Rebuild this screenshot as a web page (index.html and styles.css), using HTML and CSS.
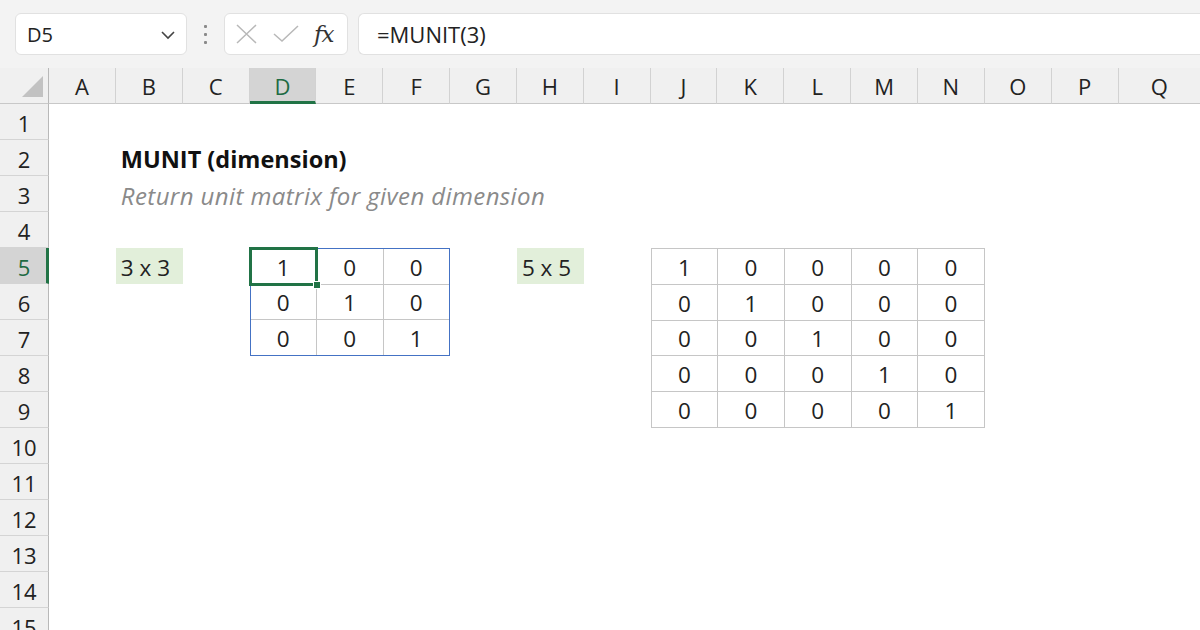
FILE: index.html
```html
<!DOCTYPE html>
<html>
<head>
<meta charset="utf-8">
<link rel="stylesheet" href="styles.css">
</head>
<body>
<div class="app">
  <div class="toolbar">
    <div class="namebox">
      <span class="nb-text">D5</span>
      <svg class="chev" width="16" height="10" viewBox="0 0 16 10"><path d="M2 2 L8 8 L14 2" fill="none" stroke="#444" stroke-width="1.6"/></svg>
    </div>
    <div class="vdots"><span></span><span></span><span></span></div>
    <div class="fxbox">
      <svg class="ic" width="24" height="20" viewBox="0 0 24 20"><path d="M2 1 L21 19 M21 1 L2 19" fill="none" stroke="#b8b8b8" stroke-width="1.5"/></svg>
      <svg class="ic" width="26" height="18" viewBox="0 0 26 18"><path d="M1 9 L9 16 L25 1" fill="none" stroke="#b8b8b8" stroke-width="1.5"/></svg>
      <span class="fx">fx</span>
    </div>
    <div class="formula">=MUNIT(3)</div>
  </div>

  <div class="sheet">
    <div class="corner"><span class="tri"></span></div>
    <div class="ch">A</div><div class="ch">B</div><div class="ch">C</div><div class="ch active">D</div>
    <div class="ch">E</div><div class="ch">F</div><div class="ch">G</div><div class="ch">H</div>
    <div class="ch">I</div><div class="ch">J</div><div class="ch">K</div><div class="ch">L</div>
    <div class="ch">M</div><div class="ch">N</div><div class="ch">O</div><div class="ch">P</div>
    <div class="ch last">Q</div>

    <div class="rh r1">1</div><div class="rh r2">2</div><div class="rh r3">3</div><div class="rh r4">4</div>
    <div class="rh r5 active">5</div><div class="rh r6">6</div><div class="rh r7">7</div><div class="rh r8">8</div>
    <div class="rh r9">9</div><div class="rh r10">10</div><div class="rh r11">11</div><div class="rh r12">12</div>
    <div class="rh r13">13</div><div class="rh r14">14</div><div class="rh r15">15</div>

    <div class="title">MUNIT (dimension)</div>
    <div class="subtitle">Return unit matrix for given dimension</div>
    <div class="label l3">3 x 3</div>
    <div class="label l5">5 x 5</div>

    <div class="mat m3">
      <div class="c sel">1<span class="selbox"></span><span class="handle"></span></div><div class="c">0</div><div class="c">0</div>
      <div class="c">0</div><div class="c">1</div><div class="c">0</div>
      <div class="c">0</div><div class="c">0</div><div class="c">1</div>
    </div>

    <div class="mat m5">
      <div class="c">1</div><div class="c">0</div><div class="c">0</div><div class="c">0</div><div class="c">0</div>
      <div class="c">0</div><div class="c">1</div><div class="c">0</div><div class="c">0</div><div class="c">0</div>
      <div class="c">0</div><div class="c">0</div><div class="c">1</div><div class="c">0</div><div class="c">0</div>
      <div class="c">0</div><div class="c">0</div><div class="c">0</div><div class="c">1</div><div class="c">0</div>
      <div class="c">0</div><div class="c">0</div><div class="c">0</div><div class="c">0</div><div class="c">1</div>
    </div>
  </div>
</div>
</body>
</html>
```

FILE: styles.css
```css
* { box-sizing: border-box; }
html, body { margin: 0; padding: 0; }
body {
  width: 1200px;
  height: 630px;
  overflow: hidden;
  background: #ffffff;
  font-family: "Open Sans", "Noto Sans", sans-serif;
  color: #1f1f1f;
}
.app { width: 1200px; height: 630px; overflow: hidden; }

/* toolbar */
.toolbar {
  height: 68px;
  background: #f3f3f3;
  display: flex;
  align-items: center;
  padding-left: 15px;
}
.namebox {
  width: 172px;
  height: 42px;
  background: #fff;
  border: 1px solid #e1e1e1;
  border-radius: 6px;
  display: flex;
  align-items: center;
  justify-content: space-between;
  padding: 0 10px 0 11px;
}
.nb-text { font-size: 20px; color: #222; }
.chev { margin-top: 1px; }
.vdots {
  width: 37px;
  display: flex;
  flex-direction: column;
  align-items: center;
  gap: 5px;
}
.vdots span { width: 3px; height: 3px; background: #8a8a8a; border-radius: 1px; }
.fxbox {
  width: 124px;
  height: 42px;
  background: #fff;
  border: 1px solid #e1e1e1;
  border-radius: 6px;
  display: flex;
  align-items: center;
  padding-left: 10px;
  gap: 14px;
}
.fx {
  font-family: "DejaVu Serif", "Liberation Serif", serif;
  font-style: italic;
  font-size: 23px;
  color: #333;
  margin-left: 1px;
  letter-spacing: -1px;
}
.formula {
  margin-left: 10px;
  flex: 1;
  height: 42px;
  background: #fff;
  border: 1px solid #e1e1e1;
  border-right: none;
  border-radius: 6px 0 0 6px;
  display: flex;
  align-items: center;
  padding-left: 18px;
  font-size: 22px;
  color: #222;
}

/* sheet grid */
.sheet {
  display: grid;
  grid-template-columns: 49px repeat(16, 66.85px) 1fr;
  grid-template-rows: repeat(16, 36px);
  background: #fff;
}
.corner {
  grid-column: 1; grid-row: 1;
  background: #f0f0f0;
  border-right: 1px solid #b8b8b8;
  border-bottom: 1px solid #c8c8c8;
  position: relative;
}
.tri {
  position: absolute;
  right: 5px;
  bottom: 6px;
  width: 0; height: 0;
  border-left: 21px solid transparent;
  border-bottom: 21px solid #c2c2c2;
}
.ch {
  grid-row: 1;
  background: #f0f0f0;
  border-right: 1px solid #d2d2d2;
  border-bottom: 1px solid #c8c8c8;
  display: flex;
  align-items: center;
  justify-content: center;
  font-size: 22px;
  color: #222;
  padding-top: 1px;
}
.ch.last { border-right: none; }
.ch.active {
  background: #d4d4d4;
  color: #1e6b43;
  border-bottom: 3px solid #217346;
  padding-top: 3px;
}
.rh {
  grid-column: 1;
  background: #f0f0f0;
  border-right: 1px solid #b8b8b8;
  border-bottom: 1px solid #d4d4d4;
  display: flex;
  align-items: center;
  justify-content: center;
  font-size: 22px;
  color: #222;
  padding-top: 2px;
}
.rh.active {
  background: #d4d4d4;
  color: #1e6b43;
  border-right: 3px solid #217346;
  padding-left: 2px;
}
.r1 { grid-row: 2; } .r2 { grid-row: 3; } .r3 { grid-row: 4; } .r4 { grid-row: 5; }
.r5 { grid-row: 6; } .r6 { grid-row: 7; } .r7 { grid-row: 8; } .r8 { grid-row: 9; }
.r9 { grid-row: 10; } .r10 { grid-row: 11; } .r11 { grid-row: 12; } .r12 { grid-row: 13; }
.r13 { grid-row: 14; } .r14 { grid-row: 15; } .r15 { grid-row: 16; }

.title {
  grid-column: 3 / span 8; grid-row: 3;
  display: flex; align-items: center;
  padding-left: 5px;
  padding-top: 2px;
  font-weight: 700;
  font-size: 23.5px;
  color: #111;
  white-space: nowrap;
}
.subtitle {
  grid-column: 3 / span 10; grid-row: 4;
  display: flex; align-items: center;
  padding-left: 5px;
  padding-top: 2px;
  font-style: italic;
  font-size: 24px;
  letter-spacing: 0.4px;
  color: #8a8a8a;
  white-space: nowrap;
}
.label {
  grid-row: 6;
  background: #e2efda;
  display: flex; align-items: center;
  padding-left: 5px;
  padding-top: 2px;
  font-size: 22.5px;
  color: #222;
  white-space: nowrap;
}
.l3 { grid-column: 3; }
.l5 { grid-column: 9; }

.mat {
  display: grid;
  gap: 1px;
  background: #c6c6c6;
  border: 1px solid #c6c6c6;
}
.m3 {
  grid-column: 5 / span 3; grid-row: 6 / span 3;
  grid-template-columns: repeat(3, 1fr);
  grid-template-rows: repeat(3, 1fr);
  border-color: #4472c4;
}
.m5 {
  grid-column: 11 / span 5; grid-row: 6 / span 5;
  grid-template-columns: repeat(5, 1fr);
  grid-template-rows: repeat(5, 1fr);
}
.c {
  background: #fff;
  display: flex; align-items: center; justify-content: center;
  font-size: 22.5px;
  color: #222;
  padding-top: 2px;
}
.sel { position: relative; }
.selbox {
  position: absolute;
  left: -2px; top: -2px; right: -2px; bottom: -2px;
  border: 3px solid #217346;
}
.handle {
  position: absolute;
  right: -5px; bottom: -5px;
  width: 8px; height: 8px;
  background: #217346;
  border: 1px solid #fff;
}
```
